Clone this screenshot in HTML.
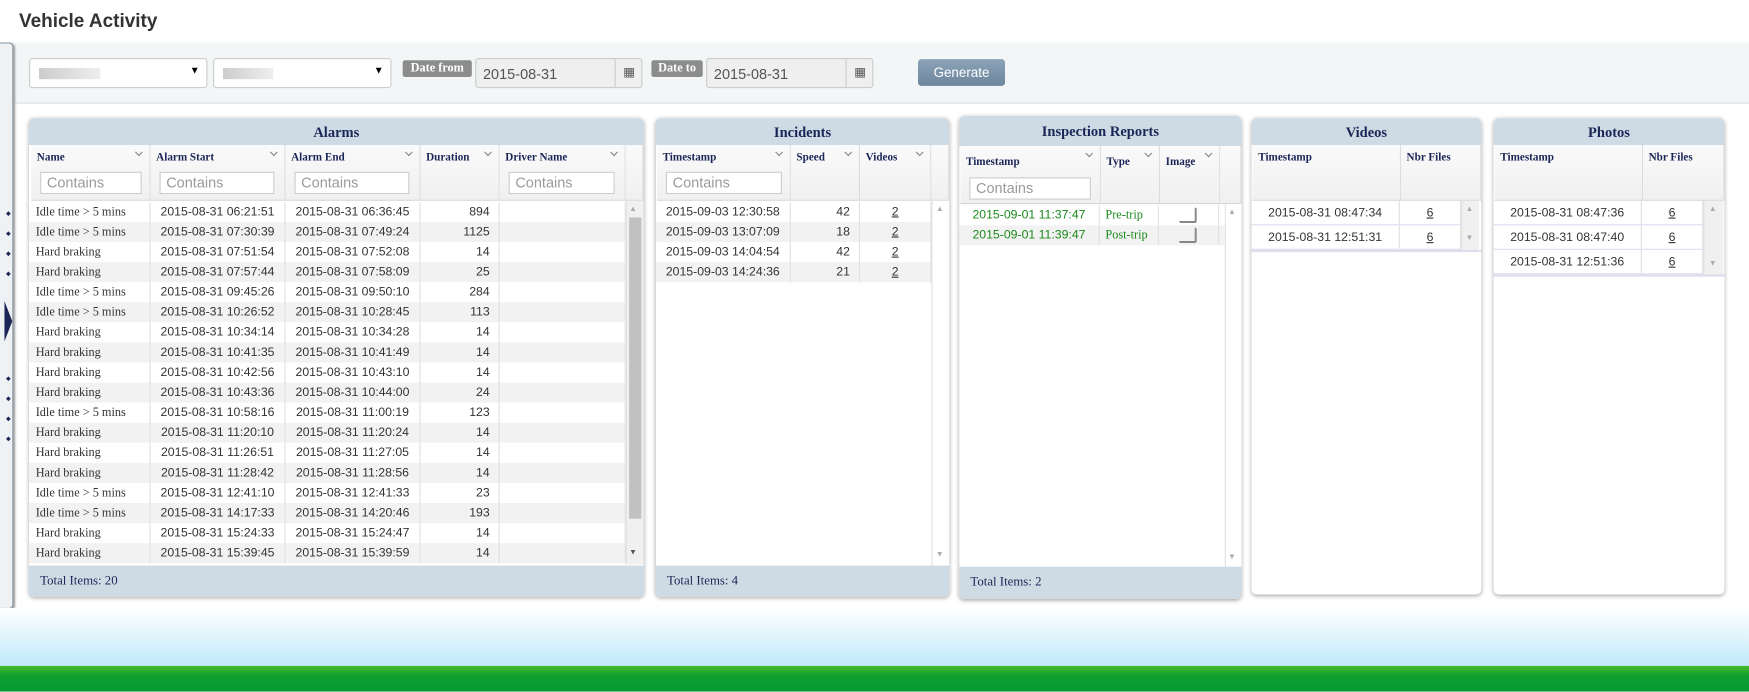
<!DOCTYPE html>
<html><head><meta charset="utf-8"><style>
*{box-sizing:border-box;margin:0;padding:0}
html,body{width:1749px;height:691px;overflow:hidden;background:#fff}
#w{position:absolute;left:0;top:0;width:1568px;height:620px;transform:scale(1.11543);transform-origin:0 0;font-family:"Liberation Sans",sans-serif}
.a{position:absolute}
.ser{font-family:"Liberation Serif",serif}
.panel{position:absolute;background:#fff;border-radius:5px;box-shadow:0 1px 4px rgba(0,0,0,.35);overflow:hidden}
.ph{position:absolute;left:0;right:0;top:0;height:24px;background:#cfdbe4;color:#1b2657;font:bold 13px "Liberation Serif",serif;text-align:center;line-height:25px}
.pf{position:absolute;left:0;right:0;bottom:0;height:28px;background:#cfdbe4;color:#1b2657;font:11.5px "Liberation Serif",serif;line-height:28px;padding-left:10px}
.ch{position:absolute;background:linear-gradient(#fafafa,#f0f0f0);border-right:1px solid #dcdcdc;border-bottom:1px solid #d6d6d6;font:bold 10px "Liberation Serif",serif;color:#1b2657;padding:6px 0 0 5px}
.ch i{position:absolute;right:7px;top:4px;width:5px;height:5px;border-right:1px solid #888;border-bottom:1px solid #888;transform:rotate(45deg)}
.flt{position:absolute;left:8px;top:24px;height:20px;border:1px solid #ccc;background:#fff;font:13px "Liberation Sans",sans-serif;color:#9a9a9a;padding-left:5px;line-height:18px}
.row{position:absolute;left:0;height:18px;font-size:11px;color:#333;line-height:18px}
.c{position:absolute;top:0;height:100%;border-right:1px solid #e0e0e0;white-space:nowrap}
.sb{position:absolute;background:#f0f0f0;border-left:1px solid #e0e0e0}
u{color:#333}
.dot{position:absolute;left:6px;width:3px;height:3px;background:#1b2657;transform:rotate(45deg)}
</style></head><body><div id="w">
<div class="a" style="left:17px;top:9px;font:bold 17px 'Liberation Sans',sans-serif;color:#333">Vehicle Activity</div>
<div class="a" style="left:0;top:38px;width:1568px;height:55px;background:#f3f6f7;border-bottom:1px solid #dde3e6"></div>
<div class="a" style="left:0;top:38px;width:12px;height:508px;background:#eef2f5;border:1px solid #8a9aa6;border-left:none;border-radius:0 4px 4px 0;box-shadow:1px 1px 2px #999"></div>
<div class="dot" style="top:190px"></div><div class="dot" style="top:208px"></div><div class="dot" style="top:226px"></div><div class="dot" style="top:244px"></div><div class="dot" style="top:338px"></div><div class="dot" style="top:356px"></div><div class="dot" style="top:374px"></div><div class="dot" style="top:392px"></div>
<div class="a" style="left:4px;top:270px;width:0;height:0;border-top:18px solid transparent;border-bottom:18px solid transparent;border-left:7px solid #1b2657"></div>
<div class="a" style="left:26px;top:52px;width:160px;height:27px;border:1px solid #ccc;border-radius:3px;background:#fff"><div class="a" style="left:8px;top:8px;width:55px;height:10px;background:linear-gradient(90deg,#ccc,#ddd,#eee)"></div><div class="a" style="right:6px;top:5px;font-size:9px">▼</div></div>
<div class="a" style="left:191px;top:52px;width:160px;height:27px;border:1px solid #ccc;border-radius:3px;background:#fff"><div class="a" style="left:8px;top:8px;width:45px;height:10px;background:linear-gradient(90deg,#ccc,#ddd,#eee)"></div><div class="a" style="right:6px;top:5px;font-size:9px">▼</div></div>
<div class="a ser" style="left:361px;top:54px;width:62px;height:15px;background:#8c8c8c;color:#fff;font-weight:bold;font-size:11px;text-align:center;line-height:15px;border-radius:2px">Date from</div>
<div class="a" style="left:426px;top:52px;width:150px;height:27px;border:1px solid #ccc;border-radius:3px;background:#efefef;font-size:13px;color:#555;padding:6px 0 0 6px">2015-08-31<div class="a" style="left:124px;top:0;width:25px;height:25px;border-left:1px solid #ccc;text-align:center;line-height:25px;font-size:11px">▦</div></div>
<div class="a ser" style="left:584px;top:54px;width:46px;height:15px;background:#8c8c8c;color:#fff;font-weight:bold;font-size:11px;text-align:center;line-height:15px;border-radius:2px">Date to</div>
<div class="a" style="left:633px;top:52px;width:150px;height:27px;border:1px solid #ccc;border-radius:3px;background:#efefef;font-size:13px;color:#555;padding:6px 0 0 6px">2015-08-31<div class="a" style="left:124px;top:0;width:25px;height:25px;border-left:1px solid #ccc;text-align:center;line-height:25px;font-size:11px">▦</div></div>
<div class="a" style="left:823px;top:53px;width:78px;height:24px;border-radius:3px;background:linear-gradient(#8ca3b8,#6c869d);color:#fff;font-size:12px;text-align:center;line-height:24px">Generate</div>

<div class="panel" style="left:26px;top:106px;width:551px;height:429px">
<div class="ph">Alarms</div>
<div class="ch" style="left:2px;top:24px;width:107px;height:50px">Name<i></i><div class="flt" style="width:91px">Contains</div></div>
<div class="ch" style="left:109px;top:24px;width:121px;height:50px">Alarm Start<i></i><div class="flt" style="width:103px">Contains</div></div>
<div class="ch" style="left:230px;top:24px;width:121px;height:50px">Alarm End<i></i><div class="flt" style="width:103px">Contains</div></div>
<div class="ch" style="left:351px;top:24px;width:71px;height:50px">Duration<i></i></div>
<div class="ch" style="left:422px;top:24px;width:113px;height:50px">Driver Name<i></i><div class="flt" style="width:95px">Contains</div></div>
<div class="ch" style="left:535px;top:24px;width:16px;height:50px"></div>
<div class="sb" style="left:535px;top:74px;width:16px;height:326px"><div class="a" style="left:2px;top:4px;font-size:7px;color:#aaa">▲</div><div class="a" style="left:2px;top:15px;width:11px;height:270px;background:#c1c1c1"></div><div class="a" style="left:2px;top:312px;font-size:7px;color:#555">▼</div></div>
<div id="al"></div>
<div class="pf">Total Items: 20</div>
</div>

<div class="panel" style="left:588px;top:106px;width:263px;height:429px">
<div class="ph">Incidents</div>
<div class="ch" style="left:1px;top:24px;width:120px;height:50px">Timestamp<i></i><div class="flt" style="width:104px">Contains</div></div>
<div class="ch" style="left:121px;top:24px;width:62px;height:50px">Speed<i></i></div>
<div class="ch" style="left:183px;top:24px;width:64px;height:50px">Videos<i></i></div>
<div class="ch" style="left:247px;top:24px;width:16px;height:50px"></div>
<div class="sb" style="left:247px;top:74px;width:16px;height:327px;background:#fff"><div class="a" style="left:3px;top:4px;font-size:7px;color:#aaa">▲</div><div class="a" style="left:3px;top:314px;font-size:7px;color:#aaa">▼</div></div>
<div id="inc"></div>
<div class="pf">Total Items: 4</div>
</div>

<div class="panel" style="left:860px;top:104px;width:253px;height:433px">
<div class="ph" style="height:27px;line-height:28px">Inspection Reports</div>
<div class="ch" style="left:1px;top:27px;width:126px;height:52px;padding-top:9px">Timestamp<i></i><div class="flt" style="width:109px;top:28px">Contains</div></div>
<div class="ch" style="left:127px;top:27px;width:53px;height:52px;padding-top:9px">Type<i></i></div>
<div class="ch" style="left:180px;top:27px;width:54px;height:52px;padding-top:9px">Image<i></i></div>
<div class="ch" style="left:234px;top:27px;width:19px;height:52px"></div>
<div class="sb" style="left:238px;top:79px;width:15px;height:326px;background:#fff"><div class="a" style="left:2px;top:4px;font-size:7px;color:#aaa">▲</div><div class="a" style="left:2px;top:313px;font-size:7px;color:#aaa">▼</div></div>
<div class="row" style="top:80px;width:238px;background:#fff;color:#1a8a1a"><div class="c" style="left:0;width:126px;text-align:center">2015-09-01 11:37:47</div><div class="c ser" style="left:126px;width:53px;padding-left:5px">Pre-trip</div><div class="c" style="left:179px;width:54px"><div class="a" style="left:18px;top:2px;width:16px;height:14px;border-right:2px solid #888;border-bottom:2px solid #888;border-radius:2px"></div></div></div>
<div class="row" style="top:98px;width:238px;background:#f2f2f2;color:#1a8a1a"><div class="c" style="left:0;width:126px;text-align:center">2015-09-01 11:39:47</div><div class="c ser" style="left:126px;width:53px;padding-left:5px">Post-trip</div><div class="c" style="left:179px;width:54px"><div class="a" style="left:18px;top:2px;width:16px;height:14px;border-right:2px solid #888;border-bottom:2px solid #888;border-radius:2px"></div></div></div>
<div class="pf" style="height:29px;line-height:29px">Total Items: 2</div>
</div>

<div class="panel" style="left:1122px;top:106px;width:206px;height:427px">
<div class="ph">Videos</div>
<div class="ch" style="left:1px;top:24px;width:133px;height:50px">Timestamp</div>
<div class="ch" style="left:134px;top:24px;width:72px;height:50px">Nbr Files</div>
<div class="sb" style="left:188px;top:74px;width:16px;height:44px"><div class="a" style="left:3px;top:4px;font-size:7px;color:#aaa">▲</div><div class="a" style="left:3px;top:30px;font-size:7px;color:#aaa">▼</div></div>
<div class="row" style="top:74px;width:188px;height:22px;line-height:22px;border-bottom:1px solid #dde"><div class="c" style="left:0;width:133px;text-align:center">2015-08-31 08:47:34</div><div class="c" style="left:133px;width:55px;text-align:center"><u>6</u></div></div>
<div class="row" style="top:96px;width:188px;height:22px;line-height:22px;border-bottom:1px solid #dde"><div class="c" style="left:0;width:133px;text-align:center">2015-08-31 12:51:31</div><div class="c" style="left:133px;width:55px;text-align:center"><u>6</u></div></div>
<div class="a" style="left:0;top:118px;width:206px;height:2px;background:#dde"></div>
</div>

<div class="panel" style="left:1339px;top:106px;width:207px;height:427px">
<div class="ph">Photos</div>
<div class="ch" style="left:1px;top:24px;width:133px;height:50px">Timestamp</div>
<div class="ch" style="left:134px;top:24px;width:73px;height:50px">Nbr Files</div>
<div class="sb" style="left:188px;top:74px;width:18px;height:66px"><div class="a" style="left:4px;top:4px;font-size:7px;color:#aaa">▲</div><div class="a" style="left:4px;top:53px;font-size:7px;color:#aaa">▼</div></div>
<div class="row" style="top:74px;width:188px;height:22px;line-height:22px;border-bottom:1px solid #dde"><div class="c" style="left:0;width:133px;text-align:center">2015-08-31 08:47:36</div><div class="c" style="left:133px;width:55px;text-align:center"><u>6</u></div></div>
<div class="row" style="top:96px;width:188px;height:22px;line-height:22px;border-bottom:1px solid #dde"><div class="c" style="left:0;width:133px;text-align:center">2015-08-31 08:47:40</div><div class="c" style="left:133px;width:55px;text-align:center"><u>6</u></div></div>
<div class="row" style="top:118px;width:188px;height:22px;line-height:22px;border-bottom:1px solid #dde"><div class="c" style="left:0;width:133px;text-align:center">2015-08-31 12:51:36</div><div class="c" style="left:133px;width:55px;text-align:center"><u>6</u></div></div>
<div class="a" style="left:0;top:140px;width:207px;height:2px;background:#dde"></div>
</div>

<div class="a" style="left:0;top:545px;width:1568px;height:53px;background:linear-gradient(#fff,#bfe9fa)"></div>
<div class="a" style="left:0;top:597px;width:1568px;height:23px;background:linear-gradient(#48b82c,#0d9e30 40%,#049a33)"></div>
</div>
<script>
var al=[["Idle time > 5 mins","06:21:51","06:36:45",894],["Idle time > 5 mins","07:30:39","07:49:24",1125],["Hard braking","07:51:54","07:52:08",14],["Hard braking","07:57:44","07:58:09",25],["Idle time > 5 mins","09:45:26","09:50:10",284],["Idle time > 5 mins","10:26:52","10:28:45",113],["Hard braking","10:34:14","10:34:28",14],["Hard braking","10:41:35","10:41:49",14],["Hard braking","10:42:56","10:43:10",14],["Hard braking","10:43:36","10:44:00",24],["Idle time > 5 mins","10:58:16","11:00:19",123],["Hard braking","11:20:10","11:20:24",14],["Hard braking","11:26:51","11:27:05",14],["Hard braking","11:28:42","11:28:56",14],["Idle time > 5 mins","12:41:10","12:41:33",23],["Idle time > 5 mins","14:17:33","14:20:46",193],["Hard braking","15:24:33","15:24:47",14],["Hard braking","15:39:45","15:39:59",14]];
var h="";al.forEach(function(r,i){h+='<div class="row" style="top:'+(75+i*18)+'px;width:535px;background:'+(i%2?'#f2f2f2':'#fff')+'"><div class="c ser" style="left:0;width:109px;padding-left:6px">'+r[0].replace('>','&gt;')+'</div><div class="c" style="left:109px;width:121px;text-align:center">2015-08-31 '+r[1]+'</div><div class="c" style="left:230px;width:121px;text-align:center">2015-08-31 '+r[2]+'</div><div class="c" style="left:351px;width:71px;text-align:right;padding-right:8px">'+r[3]+'</div><div class="c" style="left:422px;width:113px"></div></div>';});
document.getElementById('al').outerHTML=h;
var inc=[["12:30:58",42],["13:07:09",18],["14:04:54",42],["14:24:36",21]];h="";
inc.forEach(function(r,i){h+='<div class="row" style="top:'+(75+i*18)+'px;width:247px;background:'+(i%2?'#f2f2f2':'#fff')+'"><div class="c" style="left:0;width:121px;text-align:center">2015-09-03 '+r[0]+'</div><div class="c" style="left:121px;width:62px;text-align:right;padding-right:8px">'+r[1]+'</div><div class="c" style="left:183px;width:64px;text-align:center"><u>2</u></div></div>';});
document.getElementById('inc').outerHTML=h;
</script>
</body></html>
